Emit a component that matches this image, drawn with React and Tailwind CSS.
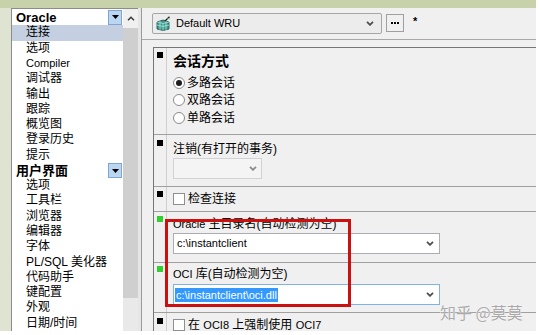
import React from 'react';

const Chevron = ({ color = '#4d4d4d' }) => (
  <svg width="8" height="5" viewBox="0 0 8 5">
    <path d="M1 0.8 L4 3.8 L7 0.8" fill="none" stroke={color} strokeWidth="1.8" />
  </svg>
);

const DropBtn = () => (
  <div className="w-[14px] h-[15px] bg-[#bcd5f0] border border-[#7ea6d4] flex items-center justify-center">
    <svg width="7" height="4" viewBox="0 0 7 4">
      <path d="M0 0 H7 L3.5 4 Z" fill="#000" />
    </svg>
  </div>
);

const Marker = ({ green, mt }) => (
  <div className={`w-[13px] shrink-0 border-r border-[#cfcfcf] pl-[3px] ${mt}`}>
    <div className={green ? 'w-[6px] h-[6px] bg-[#2fd12f]' : 'w-[6px] h-[6px] bg-black'} />
  </div>
);

const Radio = ({ checked }) => (
  <div className="w-[12px] h-[12px] rounded-full border border-[#8a8a8a] bg-white flex items-center justify-center shrink-0">
    {checked && <div className="w-[6px] h-[6px] rounded-full bg-[#1c1c1c]" />}
  </div>
);

const Check = () => <div className="w-[12px] h-[12px] border border-[#8e8f8f] bg-white shrink-0" />;

const WruIcon = () => (
  <svg width="15" height="15" viewBox="0 0 15 15">
    <path d="M1 6 L7 4 L13 6 L13 13 L7 14.5 L1 13 Z" fill="#3a9a8e" stroke="#1d4f49" strokeWidth="0.8" />
    <path d="M1 9 L7 10.5 L13 9 M1 6 L7 7.5 L13 6 M4 5 L4 13.8 M7 7.5 L7 14.5 M10 5 L10 13.8" fill="none" stroke="#bfeee6" strokeWidth="0.7" />
    <path d="M9 5 L13.5 0.8" stroke="#222" strokeWidth="1.3" />
    <path d="M11 2 L14 3" stroke="#5b7" strokeWidth="0.8" />
  </svg>
);

const oracleItems = ['连接', '选项', 'Compiler', '调试器', '输出', '跟踪', '概览图', '登录历史', '提示'];
const uiItems = ['选项', '工具栏', '浏览器', '编辑器', '字体', 'PL/SQL 美化器', '代码助手', '键配置', '外观', '日期/时间'];

const Item = ({ label, selected }) => (
  <div
    className={`h-[15.3px] leading-[15.3px] pl-[14px] whitespace-nowrap ${label === 'Compiler' ? 'text-[11px]' : 'text-[12px]'} ${selected ? 'bg-[#c4d0e1]' : ''}`}
  >
    {label}
  </div>
);

const Header = ({ label, h }) => (
  <div className={`${h} flex items-center justify-between pl-[4px] pr-[1px] bg-white`}>
    <span className="font-bold text-[13px] leading-none">{label}</span>
    <DropBtn />
  </div>
);

export default function App() {
  return (
    <div className="relative w-[542px] h-[335px] bg-white overflow-hidden text-black font-['Liberation_Sans','Noto_Sans_CJK_SC',sans-serif]">
      <div className="w-[536px] h-[331px] flex flex-col overflow-hidden">
        <div className="h-[8px] shrink-0 bg-[#c8d2aa]" />
        <div className="flex flex-1 min-h-0">
          <div className="w-[11px] shrink-0 bg-[#dfe3d2]" />
          {/* left panel */}
          <div className="flex shrink-0">
            <div className="w-[112px] border-t border-l border-[#8c8c8c] bg-white flex flex-col overflow-hidden">
              <Header label="Oracle" h="h-[19px]" />
              {oracleItems.map((it, i) => (
                <Item key={'o' + i} label={it} selected={i === 0} />
              ))}
              <Header label="用户界面" h="h-[16px]" />
              {uiItems.map((it, i) => (
                <Item key={'u' + i} label={it} />
              ))}
            </div>
            <div className="w-[15px] border-t border-[#8c8c8c] flex flex-col">
              <div className="h-[19px] bg-[#f0f0f0] flex items-center justify-center">
                <svg width="8" height="5" viewBox="0 0 8 5">
                  <path d="M1 4.2 L4 1.2 L7 4.2" fill="none" stroke="#333" strokeWidth="1.4" />
                </svg>
              </div>
              <div className="h-[270px] bg-[#cfcfcf]" />
              <div className="flex-1 bg-[#e9e9e9]" />
            </div>
            <div className="w-[3px] bg-[#e6e6e6]" />
          </div>
          {/* right panel */}
          <div className="flex-1 border-l border-[#9a9a9a] bg-[#f0f0f0] flex flex-col">
            <div className="h-[32px] shrink-0 border-b border-[#a8a8a8] pt-[5px] pl-[10px] flex items-start">
              <div className="w-[230px] h-[21px] border border-[#a6a6a6] rounded-[2px] bg-[#ececec] flex items-center pl-[3px] pr-[7px]">
                <WruIcon />
                <span className="ml-[5px] text-[11px] flex-1">Default WRU</span>
                <Chevron />
              </div>
              <div className="ml-[4px] mt-[1px] w-[18px] h-[18px] border border-[#a0a0a0] bg-[#f0f0f0] flex items-center justify-center gap-[1px]">
                <div className="w-[2px] h-[2px] bg-black" />
                <div className="w-[2px] h-[2px] bg-black" />
                <div className="w-[2px] h-[2px] bg-black" />
              </div>
              <span className="ml-[9px] mt-[3px] text-[11px] font-bold leading-none">*</span>
            </div>
            <div className="h-[7px] shrink-0" />
            <div className="ml-[11px] flex-1 border-t border-l border-[#767676] flex flex-col text-[12px]">
              {/* S1 */}
              <div className="h-[87px] shrink-0 flex border-b border-[#a0a0a0]">
                <Marker mt="pt-[4px]" />
                <div className="pl-[6px] pt-[5px]">
                  <div className="h-[16px] leading-[16px] text-[14px] font-bold">会话方式</div>
                  <div className="mt-[5px]">
                    {['多路会话', '双路会话', '单路会话'].map((t, i) => (
                      <div key={t} className="h-[17.5px] flex items-center gap-[2px]">
                        <Radio checked={i === 0} />
                        <span className="leading-none">{t}</span>
                      </div>
                    ))}
                  </div>
                </div>
              </div>
              {/* S2 */}
              <div className="h-[52px] shrink-0 flex border-b border-[#a0a0a0]">
                <Marker mt="pt-[5px]" />
                <div className="pl-[6px] pt-[6px]">
                  <div className="h-[16px] leading-[16px]">注销(有打开的事务)</div>
                  <div className="mt-[1px] w-[89px] h-[21px] border border-[#d2d2d2] bg-[#f4f4f4] flex items-center justify-end pr-[4px]">
                    <Chevron color="#8a8a8a" />
                  </div>
                </div>
              </div>
              {/* S3 */}
              <div className="h-[25px] shrink-0 flex border-b border-[#a0a0a0]">
                <Marker mt="pt-[4px]" />
                <div className="pl-[6px] pt-[4px] flex items-center gap-[3px] h-[20px]">
                  <Check />
                  <span className="leading-none">检查连接</span>
                </div>
              </div>
              {/* S4 */}
              <div className="h-[51px] shrink-0 flex border-b border-[#a0a0a0]">
                <Marker green mt="pt-[4px]" />
                <div className="pl-[6px] pt-[4px]">
                  <div className="h-[16px] leading-[16px] whitespace-nowrap">
                    <span className="text-[11px]">Oracle </span>主目录名(自动检测为空)
                  </div>
                  <div className="mt-[1px] w-[267px] h-[21px] border border-[#abadb3] bg-white flex items-center pl-[3px] pr-[5px]">
                    <span className="flex-1 text-[11px]">c:\instantclient</span>
                    <Chevron />
                  </div>
                </div>
              </div>
              {/* S5 */}
              <div className="h-[50px] shrink-0 flex border-b border-[#a0a0a0]">
                <Marker green mt="pt-[3px]" />
                <div className="pl-[6px] pt-[3px]">
                  <div className="h-[16px] leading-[16px] whitespace-nowrap">
                    <span className="text-[11px]">OCI </span>库(自动检测为空)
                  </div>
                  <div className="mt-[2px] w-[267px] h-[21px] border border-[#7eb4ea] bg-white flex items-center pl-[1px] pr-[5px]">
                    <div className="flex-1">
                      <span className="bg-[#3399ff] text-white text-[11px] px-[1px] py-[1px]">c:\instantclient\oci.dll</span>
                    </div>
                    <Chevron />
                  </div>
                </div>
              </div>
              {/* S6 */}
              <div className="flex-1 flex">
                <Marker mt="pt-[5px]" />
                <div className="pl-[6px] pt-[5px] flex items-center gap-[3px] h-[18px]">
                  <Check />
                  <span className="leading-none whitespace-nowrap">
                    在 <span className="text-[11px]">OCI8</span> 上强制使用 <span className="text-[11px]">OCI7</span>
                  </span>
                </div>
              </div>
            </div>
          </div>
        </div>
      </div>
      {/* annotation rectangle */}
      <div className="absolute left-[165px] top-[219px] w-[186px] h-[88px] border-[3px] border-[#cc1010]" />
      {/* watermark */}
      <div className="absolute left-[440px] top-[302px] text-[16px] leading-[20px] text-[#a9a9a9] whitespace-nowrap font-['Noto_Sans_CJK_SC',sans-serif] [text-shadow:0_0_1px_#fff,0_0_1px_#fff]">
        知乎 @莫莫
      </div>
    </div>
  );
}
